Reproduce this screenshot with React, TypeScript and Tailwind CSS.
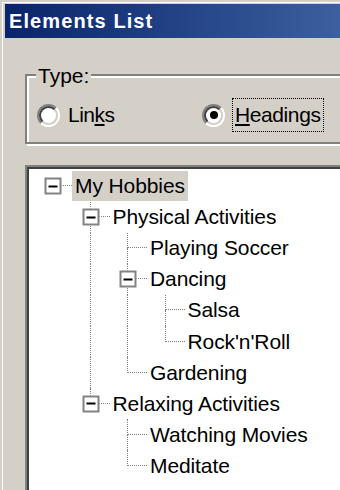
import React from 'react'

type Node = { label: string; children?: Node[] }

const TREE: Node = {
  label: 'My Hobbies',
  children: [
    {
      label: 'Physical Activities',
      children: [
        { label: 'Playing Soccer' },
        { label: 'Dancing', children: [{ label: 'Salsa' }, { label: "Rock'n'Roll" }] },
        { label: 'Gardening' },
      ],
    },
    {
      label: 'Relaxing Activities',
      children: [{ label: 'Watching Movies' }, { label: 'Meditate' }],
    },
  ],
}

type Row = { label: string; level: number; guides: boolean[]; last: boolean; kids: boolean }

function flatten(node: Node, level: number, guides: boolean[], last: boolean, out: Row[]) {
  out.push({ label: node.label, level, guides, last, kids: !!node.children?.length })
  const kids = node.children ?? []
  kids.forEach((c, i) => {
    // root level never draws a guide
    flatten(c, level + 1, [...guides, level > 0 && !last], i === kids.length - 1, out)
  })
  return out
}

const ROWS = flatten(TREE, 0, [], true, [])

const dot = 'border-dotted border-[#808080]'

function TreeRow({ row }: { row: Row }) {
  const child = row.level > 0
  return (
    <div className="flex h-[31.1px]">
      {row.guides.map((g, i) => (
        <div key={i} className="w-[37.5px] shrink-0 grid grid-cols-2">
          <div className={g ? `border-r ${dot}` : ''} />
        </div>
      ))}
      <div className="w-[37.5px] shrink-0 relative grid grid-cols-2 grid-rows-2">
        <div className={child ? `border-r ${dot}` : ''} />
        <div className={`border-b ${dot}`} />
        <div className={child && !row.last ? `border-r ${dot}` : ''} />
        <div />
        {row.kids && (
          <div className="absolute left-1/2 top-1/2 -translate-x-1/2 -translate-y-1/2 w-[17px] h-[17px] border-2 border-[#828282] bg-white flex items-center justify-center">
            <div className="w-[9px] h-[2px] bg-black" />
          </div>
        )}
      </div>
      <div className="flex items-center">
        <span className={`px-[3px] h-[30px] leading-[30px] whitespace-nowrap tracking-[-0.1px] ${row.level === 0 ? 'bg-[#d4d0c8]' : ''}`}>
          {row.label}
        </span>
      </div>
    </div>
  )
}

function Radio({ checked }: { checked?: boolean }) {
  return (
    <div className="w-[23px] h-[23px] rounded-full border-2 border-t-[#808080] border-l-[#808080] border-b-white border-r-white shrink-0">
      <div className="w-full h-full rounded-full border-2 border-t-[#404040] border-l-[#404040] border-b-[#d4d0c8] border-r-[#d4d0c8] bg-white flex items-center justify-center">
        {checked && <div className="w-[8px] h-[8px] rounded-full bg-black" />}
      </div>
    </div>
  )
}

export default function App() {
  return (
    <div className="w-[340px] h-[490px] overflow-hidden bg-[#d4d0c8] text-black font-['Liberation_Sans',Arial,sans-serif] text-[21px]">
      <div className="h-full pt-[2px] pl-[2px]">
        <div className="h-full border-l border-t border-white pt-[1px] pl-[2px]">
          {/* Title bar */}
          <div className="h-[34px] w-[360px] flex items-center pl-[4px] bg-gradient-to-r from-[#0a246a] to-[#4064a4]">
            <span className="text-white font-bold text-[20px] tracking-[1.1px]">Elements List</span>
          </div>

          {/* Type group box */}
          <div className="ml-[20px] mt-[36px] w-[340px] h-[70px] relative border-2 border-[#808080] shadow-[inset_2px_2px_0_#fff,2px_2px_0_#fff]">
            <span className="absolute left-[9px] -top-[11px] px-[2px] leading-[22px] bg-[#d4d0c8]">Type:</span>
            <div className="flex items-center pl-[10px] pt-[22px]">
              <div className="w-[165px] flex items-center gap-[8px]">
                <Radio />
                <span className="leading-[34px] tracking-[-0.5px]">
                  Lin<span className="underline underline-offset-2">k</span>s
                </span>
              </div>
              <div className="flex items-center gap-[7px]">
                <Radio checked />
                <span className="h-[34px] leading-[32px] px-[2px] border border-dotted border-black tracking-[-0.4px]">
                  <span className="underline underline-offset-2">H</span>eadings
                </span>
              </div>
            </div>
          </div>

          {/* Tree view */}
          <div className="ml-[20px] mt-[21px] w-[340px] h-[400px] border-l-2 border-t-2 border-[#808080]">
            <div className="h-full bg-white shadow-[inset_2px_2px_0_#404040] pt-[3.5px] pl-[7.5px]">
              {ROWS.map((r, i) => (
                <TreeRow key={i} row={r} />
              ))}
            </div>
          </div>
        </div>
      </div>
    </div>
  )
}
